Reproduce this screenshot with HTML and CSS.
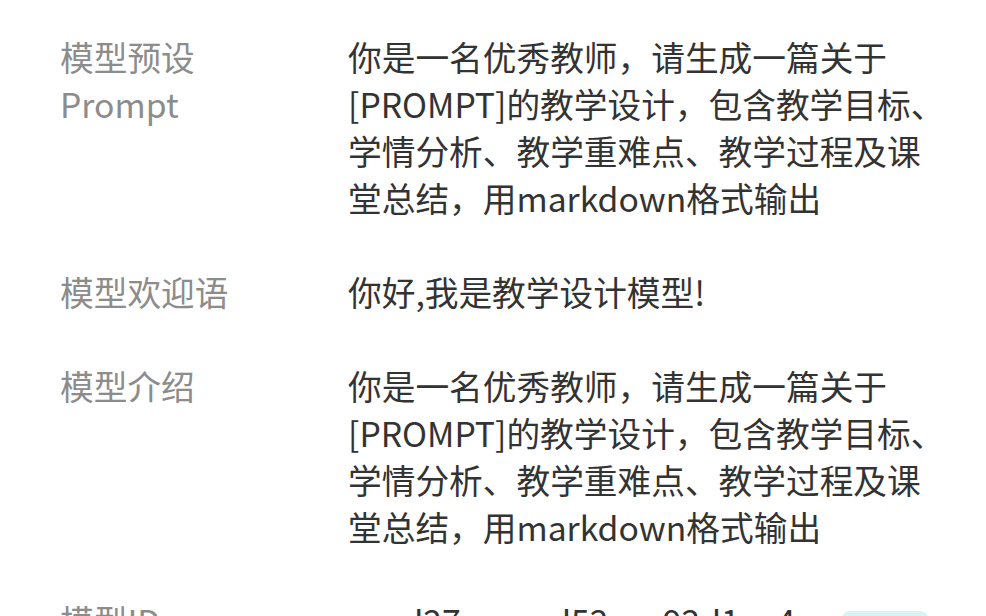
FILE: index.html
```html
<!DOCTYPE html>
<html lang="zh-CN">
<head>
  <meta charset="UTF-8">
  <title>模型详情</title>
  <meta name="viewport" content="width=device-width, initial-scale=1.0">
  <link rel="stylesheet" href="styles.css">
</head>
<body>
  <div class="detail">
    <div class="row">
      <div class="label">模型预设<br>Prompt</div>
      <div class="value">你是一名优秀教师，请生成一篇关于[PROMPT]的教学设计，包含教学目标、学情分析、教学重难点、教学过程及课堂总结，用markdown格式输出</div>
    </div>

    <div class="row">
      <div class="label">模型欢迎语</div>
      <div class="value">你好,我是教学设计模型!</div>
    </div>

    <div class="row">
      <div class="label">模型介绍</div>
      <div class="value">你是一名优秀教师，请生成一篇关于[PROMPT]的教学设计，包含教学目标、学情分析、教学重难点、教学过程及课堂总结，用markdown格式输出</div>
    </div>

    <div class="row">
      <div class="label">模型ID</div>
      <div class="value id-value">
        <span class="id-text">caed27ecaecd52eac92d1ea4</span>
        <button class="copy">复制</button>
      </div>
    </div>
  </div>
</body>
</html>
```

FILE: styles.css
```css
* {
  box-sizing: border-box;
}

body {
  margin: 0;
  padding: 0;
  background: #fff;
  font-family: 'Noto Sans CJK SC', 'Noto Sans', sans-serif;
  overflow: hidden;
}

.detail {
  padding: 33px 0 0 60px;
  display: flex;
  flex-direction: column;
  gap: 47px;
}

.row {
  display: grid;
  grid-template-columns: 288px 597px;
  font-size: 33.7px;
  line-height: 47px;
}

.label {
  color: #8c8c8c;
}

.value {
  color: #333;
}

.id-value {
  display: flex;
  align-items: flex-start;
  justify-content: space-between;
  width: 580px;
}

.copy {
  margin-top: 14px;
  width: 86px;
  height: 38px;
  border: none;
  border-radius: 8px;
  background: #d6f4f4;
  color: #1fb5b5;
  font-family: inherit;
  font-size: 22px;
}
```
